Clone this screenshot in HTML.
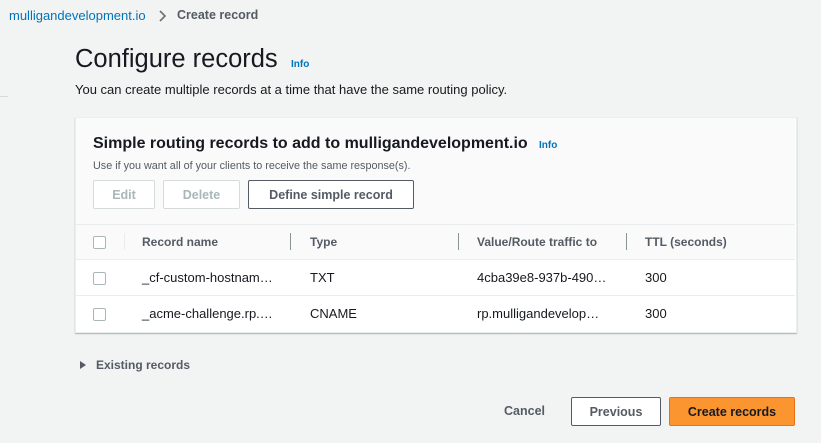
<!DOCTYPE html>
<html><head><style>
body{margin:0;width:821px;height:443px;background:#f2f3f3;font-family:"Liberation Sans",sans-serif;position:relative;overflow:hidden;color:#16191f}
.a{position:absolute;white-space:nowrap}
.btn{position:absolute;box-sizing:border-box;border:1px solid;border-radius:2px;font-weight:bold;font-size:12.5px;display:flex;align-items:center;justify-content:center}
.cb{position:absolute;width:11px;height:11px;border:1px solid #aab7b8;border-radius:2px;background:#fff;left:93px}
.sep{position:absolute;width:1px;background:#879596}
.hd{font-weight:bold;font-size:12px;color:#545b64;top:235px}
.td{font-size:13px;color:#16191f}
</style></head><body>
<div class="a" style="left:0;top:96px;width:8px;height:1px;background:#d5dbdb"></div>
<div class="a" style="left:9px;top:8px;font-size:13px;color:#0073bb">mulligandevelopment.io</div>
<svg class="a" style="left:158px;top:9px" width="9" height="14"><path d="M2 2l5 5-5 5" stroke="#687078" stroke-width="1.6" fill="none"/></svg>
<div class="a" style="left:177px;top:8px;font-size:12.5px;font-weight:bold;color:#545b64">Create record</div>
<div class="a" style="left:75px;top:45px;font-size:25.5px;color:#16191f">Configure records</div>
<div class="a" style="left:291px;top:59px;font-size:10px;font-weight:bold;color:#0073bb">Info</div>
<div class="a" style="left:75px;top:82px;font-size:13px;color:#16191f">You can create multiple records at a time that have the same routing policy.</div>

<div class="a" style="left:75px;top:117px;width:720px;height:214px;background:#fff;border:1px solid #eaeded;box-shadow:0 1px 1px rgba(0,28,36,.3)"></div>
<div class="a" style="left:76px;top:118px;width:719px;height:141px;background:#fafafa;border-bottom:1px solid #eaeded"></div>
<div class="a" style="left:76px;top:224px;width:719px;height:1px;background:#eaeded"></div>
<div class="a" style="left:76px;top:295px;width:719px;height:1px;background:#eaeded"></div>
<div class="a" style="left:93px;top:135px;font-size:16px;font-weight:bold">Simple routing records to add to mulligandevelopment.io</div>
<div class="a" style="left:539px;top:140px;font-size:10px;font-weight:bold;color:#0073bb">Info</div>
<div class="a" style="left:93px;top:160px;font-size:10.8px;color:#545b64">Use if you want all of your clients to receive the same response(s).</div>
<div class="btn" style="left:93px;top:180px;width:62px;height:29px;border-color:#d5dbdb;color:#aab7b8;background:#fff">Edit</div>
<div class="btn" style="left:163px;top:180px;width:77px;height:29px;border-color:#d5dbdb;color:#aab7b8;background:#fff">Delete</div>
<div class="btn" style="left:248px;top:180px;width:166px;height:29px;border-color:#545b64;color:#545b64;background:#fff">Define simple record</div>

<div class="cb" style="top:236px"></div>
<div class="sep" style="left:124px;top:233px;height:17px;background:#eaeded"></div>
<div class="a hd" style="left:142px">Record name</div>
<div class="sep" style="left:290px;top:233px;height:17px"></div>
<div class="a hd" style="left:310px">Type</div>
<div class="sep" style="left:458px;top:233px;height:17px"></div>
<div class="a hd" style="left:477px">Value/Route traffic to</div>
<div class="sep" style="left:626px;top:233px;height:17px"></div>
<div class="a hd" style="left:645px">TTL (seconds)</div>

<div class="cb" style="top:272px"></div>
<div class="a td" style="left:142px;top:270px">_cf-custom-hostnam…</div>
<div class="a td" style="left:310px;top:270px">TXT</div>
<div class="a td" style="left:477px;top:270px">4cba39e8-937b-490…</div>
<div class="a td" style="left:645px;top:270px">300</div>
<div class="cb" style="top:308px"></div>
<div class="a td" style="left:142px;top:306px">_acme-challenge.rp.…</div>
<div class="a td" style="left:310px;top:306px">CNAME</div>
<div class="a td" style="left:477px;top:306px">rp.mulligandevelop…</div>
<div class="a td" style="left:645px;top:306px">300</div>

<svg class="a" style="left:79px;top:360px" width="8" height="10"><path d="M1 1l6 4-6 4z" fill="#545b64"/></svg>
<div class="a" style="left:96px;top:358px;font-size:12px;font-weight:bold;color:#545b64">Existing records</div>

<div class="a" style="left:504px;top:404px;font-size:12.5px;font-weight:bold;color:#545b64">Cancel</div>
<div class="btn" style="left:571px;top:397px;width:90px;height:29px;border-color:#545b64;color:#545b64;background:#fff">Previous</div>
<div class="btn" style="left:669px;top:397px;width:126px;height:29px;border-color:#ec7211;color:#16191f;background:#fb9530">Create records</div>
</body></html>
